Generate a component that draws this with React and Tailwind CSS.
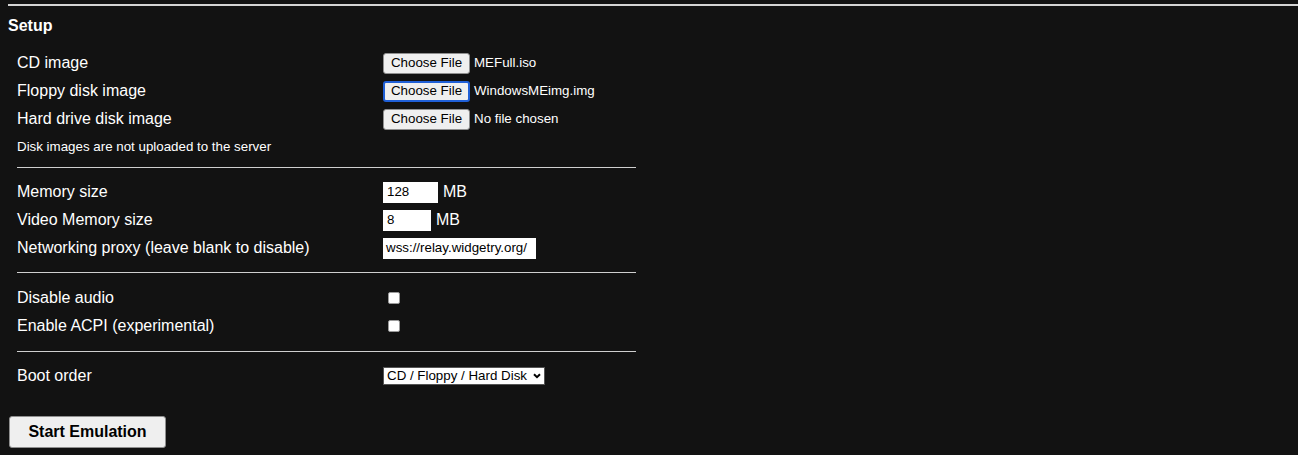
import React from 'react';

const font = { fontFamily: '"Liberation Sans", Arial, sans-serif' };

function FileRow({ label, fileName, focused }) {
  return (
    <div className="flex h-[28px] items-center">
      <div className="w-[366px] text-[16px]">{label}</div>
      <div className="flex items-center">
        <div
          className={`flex h-[21px] w-[87px] items-center justify-center rounded-[3px] bg-[#efefef] text-[13.33px] text-black ${
            focused ? 'border-2 border-[#1f5fd6]' : 'border border-[#8f8f8f]'
          }`}
        >
          Choose File
        </div>
        <span className="ml-[4px] text-[13.33px]">{fileName}</span>
      </div>
    </div>
  );
}

function Row({ label, children }) {
  return (
    <div className="flex h-[28px] items-center">
      <div className="w-[366px] text-[16px]">{label}</div>
      <div className="flex items-center">{children}</div>
    </div>
  );
}

function Checkbox() {
  return <span className="ml-[5px] block h-[12px] w-[12px] rounded-[2px] border border-[#9a9a9a] bg-white" />;
}

export default function App() {
  return (
    <div className="min-h-[455px] w-full bg-[#121212] pt-[4px] text-white" style={font}>
      {/* top rule */}
      <div className="ml-[8px] h-[2px] bg-[#d4d4d4]" />

      <div className="mt-[11px] pl-[8px] text-[16px] font-bold leading-[18px]">Setup</div>

      <div className="mt-[14px] pl-[17px]">
        <FileRow label="CD image" fileName="MEFull.iso" />
        <FileRow label="Floppy disk image" fileName="WindowsMEimg.img" focused />
        <FileRow label="Hard drive disk image" fileName="No file chosen" />
        <div className="flex h-[28px] items-center text-[13.33px]">Disk images are not uploaded to the server</div>

        <div className="mb-[10px] mt-[6px] h-px w-[619px] bg-[#cfcfcf]" />

        <Row label="Memory size">
          <div className="flex h-[21px] w-[55px] items-center bg-white px-[4px] text-[13.33px] text-black">128</div>
          <span className="ml-[5px] text-[16px]">MB</span>
        </Row>
        <Row label="Video Memory size">
          <div className="flex h-[21px] w-[48px] items-center bg-white px-[4px] text-[13.33px] text-black">8</div>
          <span className="ml-[5px] text-[16px]">MB</span>
        </Row>
        <Row label="Networking proxy (leave blank to disable)">
          <div className="flex h-[21px] w-[153px] items-center bg-white px-[3px] text-[13.33px] text-black">wss://relay.widgetry.org/</div>
        </Row>

        <div className="mb-[11px] mt-[10px] h-px w-[619px] bg-[#cfcfcf]" />

        <Row label="Disable audio">
          <Checkbox />
        </Row>
        <Row label="Enable ACPI (experimental)">
          <Checkbox />
        </Row>

        <div className="mb-[10px] mt-[11px] h-px w-[619px] bg-[#cfcfcf]" />

        <Row label="Boot order">
          <div className="flex h-[18px] w-[162px] items-center justify-between border border-[#555] bg-white pl-[3px] pr-[3px] text-[13.33px] text-black">
            <span>CD / Floppy / Hard Disk</span>
            <svg width="8" height="6" viewBox="0 0 8 6" fill="none">
              <path d="M1 1.2l3 3 3-3" stroke="#000" strokeWidth="2" />
            </svg>
          </div>
        </Row>
      </div>

      <div className="mt-[26px] pl-[9px] pb-[7px]">
        <div className="flex h-[32px] w-[157px] items-center justify-center rounded-[3px] border border-[#8f8f8f] bg-[#efefef] text-[16px] font-bold text-black">
          Start Emulation
        </div>
      </div>
    </div>
  );
}
